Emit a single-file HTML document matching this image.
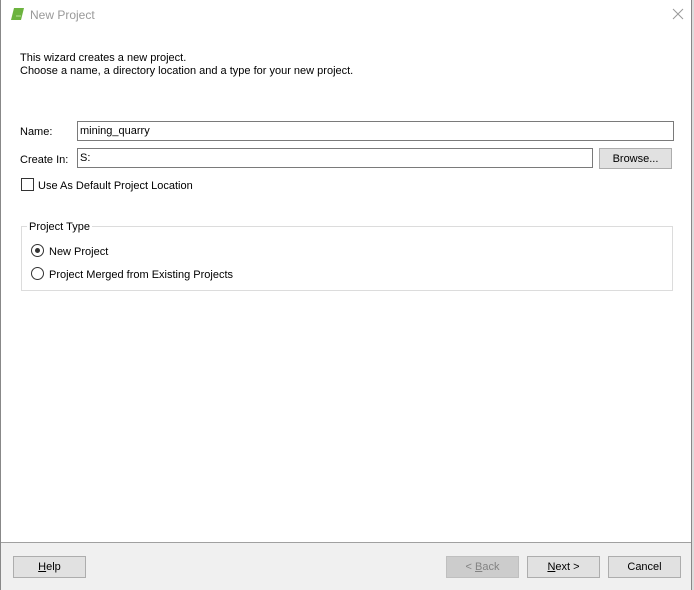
<!DOCTYPE html>
<html><head><style>
body{margin:0;width:694px;height:590px;background:#fff;font-family:"Liberation Sans",sans-serif;font-size:11px;color:#000;position:relative;overflow:hidden}
.a{position:absolute}
.btn{position:absolute;top:556px;height:20px;width:71px;background:#e1e1e1;border:1px solid #adadad;text-align:center;line-height:21px;font-size:11px}
.inp{position:absolute;height:18px;border:1px solid #7a7a7a;background:#fff;line-height:19px;padding-left:2px;font-size:11px}
</style></head><body>
<div class="a" style="left:0;top:0;width:1px;height:590px;background:#888"></div>
<div class="a" style="left:691px;top:0;width:1px;height:590px;background:#888"></div>
<div class="a" style="left:692px;top:0;width:2px;height:590px;background:#ddd"></div>
<div class="a" style="left:0;top:589px;width:692px;height:1px;background:#888"></div>
<svg class="a" style="left:11px;top:8px" width="13" height="12"><path d="M3 0H13L10 12H0Z" fill="#6cb33e"/><path d="M5 8h5" stroke="#b9e09a" stroke-width="1"/></svg>
<div class="a" style="left:30px;top:8px;font-size:12px;color:#999">New Project</div>
<svg class="a" style="left:672px;top:8px" width="12" height="12"><path d="M1 1L11 11M11 1L1 11" stroke="#999" stroke-width="1"/></svg>
<div class="a" style="left:20px;top:52px;line-height:13px">This wizard creates a new project.<br>Choose a name, a directory location and a type for your new project.</div>
<div class="a" style="left:20px;top:126px">Name:</div>
<div class="inp" style="left:77px;top:121px;width:593px">mining_quarry</div>
<div class="a" style="left:20px;top:154px">Create In:</div>
<div class="inp" style="left:77px;top:148px;width:512px">S:</div>
<div class="a" style="left:599px;top:148px;width:71px;height:19px;background:#e1e1e1;border:1px solid #adadad;text-align:center;line-height:20px">Browse...</div>
<div class="a" style="left:21px;top:178px;width:11px;height:11px;border:1px solid #333;background:#fff"></div>
<div class="a" style="left:38px;top:180px">Use As Default Project Location</div>
<div class="a" style="left:21px;top:226px;width:650px;height:63px;border:1px solid #dcdcdc"></div>
<div class="a" style="left:27px;top:221px;background:#fff;padding:0 2px">Project Type</div>
<div class="a" style="left:31px;top:244px;width:11px;height:11px;border:1px solid #333;border-radius:50%;background:#fff"></div>
<div class="a" style="left:35px;top:248px;width:5px;height:5px;border-radius:50%;background:#333"></div>
<div class="a" style="left:49px;top:246px">New Project</div>
<div class="a" style="left:31px;top:267px;width:11px;height:11px;border:1px solid #333;border-radius:50%;background:#fff"></div>
<div class="a" style="left:49px;top:269px">Project Merged from Existing Projects</div>
<div class="a" style="left:1px;top:542px;width:690px;height:47px;background:#f0f0f0;border-top:1px solid #a0a0a0"></div>
<div class="btn" style="left:13px"><u>H</u>elp</div>
<div class="btn" style="left:446px;background:#ccc;border-color:#bfbfbf;color:#838383">&lt; <u>B</u>ack</div>
<div class="btn" style="left:527px"><u>N</u>ext &gt;</div>
<div class="btn" style="left:608px">Cancel</div>
</body></html>
